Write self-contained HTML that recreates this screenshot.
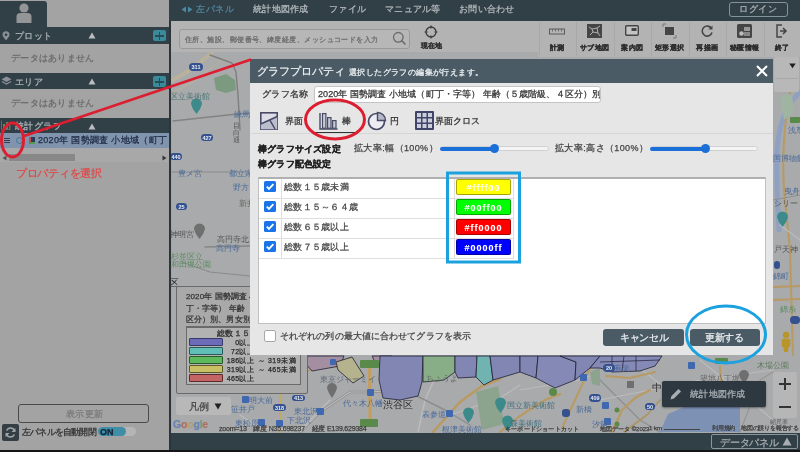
<!DOCTYPE html>
<html><head><meta charset="utf-8">
<style>
*{box-sizing:border-box;margin:0;padding:0}
html,body{width:800px;height:452px;overflow:hidden;background:#a8a9aa;font-family:"Liberation Sans",sans-serif;}
.a{position:absolute;white-space:nowrap;-webkit-text-stroke-width:0.25px}
#root{position:absolute;left:0;top:0;width:800px;height:452px;will-change:transform}
</style></head><body><div id="root">
<svg class="a" style="left:0;top:0" width="800" height="452">
<rect x="170" y="50" width="630" height="385" fill="#a9aaab"/>
<g fill="none" stroke-linecap="round" stroke-linejoin="round">
<!-- left strip -->
<path d="M168 83 L190 70 L212 53" stroke="#b9b19b" stroke-width="4"/>
<path d="M168 96 L196 80 L224 58" stroke="#b5af9f" stroke-width="1.5"/>
<path d="M210 55 L232 63 L236 72 L238 95 L240 130" stroke="#7e7e7e" stroke-width="1.4"/>
<path d="M173 121 L237 114 L250 113" stroke="#838383" stroke-width="1.3"/>
<path d="M170 172 L250 172" stroke="#8a8a8a" stroke-width="1.1"/>
<path d="M205 247 L250 246" stroke="#868686" stroke-width="1.3"/>
<path d="M182 262 L210 272 L250 276" stroke="#8a8a8a" stroke-width="1.2"/>
<path d="M230 290 L250 300" stroke="#8a8a8a" stroke-width="1"/>
<path d="M171 110 L171 440" stroke="#9aa3b6" stroke-width="1.2"/>
<!-- bottom strip light roads -->
<path d="M300 432 L320 412 L350 392 L372 392 L420 388" stroke="#8a8a8a" stroke-width="2.6"/>
<path d="M300 432 L320 412 L350 392 L372 392 L420 388" stroke="#bdbdbd" stroke-width="1.2"/>
<path d="M418 432 L425 400 L435 378" stroke="#bdbdbd" stroke-width="1.4"/>
<path d="M405 390 L445 410 L470 425" stroke="#8e8e8e" stroke-width="1.4"/>
<path d="M450 415 L500 398 L520 385" stroke="#bbbbbb" stroke-width="1.3"/>
<path d="M520 390 L580 380 L600 372" stroke="#bbbbbb" stroke-width="1.2"/>
<path d="M600 380 L640 420 L660 432" stroke="#8e8e8e" stroke-width="1.2"/>
<path d="M630 360 L680 400 L720 432" stroke="#bcbcbc" stroke-width="1.2"/>
<path d="M700 360 L740 392 L773 420" stroke="#bcbcbc" stroke-width="1.2"/>
<path d="M740 432 L760 380 L773 372" stroke="#909090" stroke-width="1"/>
<path d="M600 400 L650 390 L700 380 L773 370" stroke="#bcbcbc" stroke-width="1"/>
<!-- orange roads -->
<path d="M369.5 366 L370 420" stroke="#c39e5e" stroke-width="3"/>
<path d="M433 432 L460 402 L482 386 L500 379" stroke="#b89a62" stroke-width="2.6"/>
<path d="M500 432 L520 416 L545 400 L560 394" stroke="#b89a62" stroke-width="2.2"/>
<path d="M562 428 L575 400 L590 368 L600 358" stroke="#b89a62" stroke-width="2"/>
<path d="M606 376 L630 378 L655 372" stroke="#b89a62" stroke-width="2"/>
<path d="M612 432 L622 410 L635 398 L650 390" stroke="#b89a62" stroke-width="2.2"/>
<path d="M624 432 L648 414 L660 400" stroke="#ad9562" stroke-width="1.6"/>
<path d="M720 366 L724 432" stroke="#b89a62" stroke-width="1.8"/>
<path d="M300 372 L335 366 L350 358" stroke="#b89a62" stroke-width="1.6"/>
<!-- right strip -->
<path d="M800 92 Q780 110 777 150 Q776 190 779 230" stroke="#8fa1c2" stroke-width="5"/>
<path d="M790 92 Q781 140 784 190 L790 250 L793 355" stroke="#b89a62" stroke-width="2"/>
<path d="M773 287 L800 286 M773 300 L800 299" stroke="#b89a62" stroke-width="2"/>
<path d="M773 200 L800 195" stroke="#8e8e8e" stroke-width="1"/>
<path d="M780 225 L800 240" stroke="#bcbcbc" stroke-width="1.2"/>
</g>
<!-- parks / areas -->
<path d="M214 78 L226 74 L235 80 L236 90 L226 93 L216 90Z" fill="#7b9a80"/>
<path d="M780 96 L792 94 L794 112 L784 120Z" fill="#a0b4a2"/>
<path d="M476 392 L498 386 L504 424 L482 430Z" fill="#8ca48e"/>
<path d="M590 372 L600 368 L600 386 L592 384Z" fill="#8ca48e"/>
<!-- choropleth -->
<g stroke="#1f2035" stroke-width="0.8" stroke-linejoin="round">
<path d="M308 356 L344 356 L340 366 L312 371 L306 364Z" fill="#a48fa2"/>
<path d="M336 362 L352 357 L364 376 L353 383 L338 370Z" fill="#b4b38e"/>
<path d="M372 356 L392 356 L388 364 L376 364Z" fill="#a48fa2"/>
<path d="M380 356 L423 356 L422 382 L418 396 L400 400 L383 398 L379 380Z" fill="#8286b2"/>
<path d="M423 356 L455 356 L455 372 L444 380 L423 382Z" fill="#88ae88"/>
<path d="M455 356 L477 356 L476 377 L458 378 L455 372Z" fill="#8286b2"/>
<path d="M477 356 L490 356 L493 380 L484 385 L476 377Z" fill="#70b3b0"/>
<path d="M490 356 L520 356 L520 372 L500 378 L493 380Z" fill="#8286b2"/>
<path d="M520 356 L538 356 L536 378 L520 372Z" fill="#8286b2"/>
<path d="M538 356 L560 356 L576 362 L575 380 L555 388 L536 378Z" fill="#8589b5"/>
<path d="M560 356 L600 356 L590 368 L575 380 L576 362Z" fill="#8286b2"/>
<path d="M600 356 L662 356 L655 366 L640 371 L612 372 L600 368 L590 368Z" fill="#8589b5"/>
<path d="M612 356 L612 372 M624 356 L622 371 M636 356 L636 371 M600 362 L660 360" fill="none" stroke-width="0.7"/>
</g>
<!-- water -->
<path d="M660 432 L668 414 L700 400 L722 396 L740 400 L740 432Z" fill="#7d91b5"/>
<!-- shields / stations -->
<g fill="#34508f">
<rect x="189" y="63" width="14" height="8" rx="4"/>
<rect x="201" y="134" width="12" height="7" rx="3.5"/>
<rect x="170" y="153" width="12" height="7" rx="3.5"/>
<rect x="176" y="203" width="11" height="7" rx="3.5"/>
<rect x="603" y="364" width="12" height="8" rx="4"/>
<rect x="589" y="394" width="12" height="8" rx="4"/>
<rect x="645" y="403" width="10" height="7" rx="3.5"/>
<rect x="562" y="409" width="8" height="8" rx="3"/>
<rect x="774" y="261" width="6" height="8" rx="3"/>
<rect x="790" y="316" width="10" height="8" rx="4"/>
</g>
<g fill="#3f68b0">
<rect x="330" y="359" width="6" height="6" rx="1"/>
<rect x="367" y="389" width="7" height="7" rx="1"/>
<rect x="316" y="408" width="7" height="7" rx="1"/>
<rect x="446" y="410" width="7" height="7" rx="1"/>
<rect x="580" y="374" width="7" height="7" rx="1"/>
<rect x="602" y="402" width="7" height="7" rx="1"/>
<rect x="604" y="418" width="7" height="7" rx="1"/>
<rect x="688" y="362" width="7" height="7" rx="1"/>
</g>
<g fill="#5a8a4a">
<rect x="360" y="360" width="19" height="8" rx="1"/>
<rect x="360" y="419" width="18" height="8" rx="1"/>
<rect x="790" y="117" width="10" height="6" rx="1"/>
<rect x="715" y="358" width="13" height="6" rx="1"/>
<circle cx="553" cy="392" r="4"/>
<circle cx="617" cy="410" r="2.5"/><circle cx="617" cy="424" r="2.5"/>
</g>
<g fill="#3d8a8a">
<path d="M191 104 A5.5 5.5 0 1 1 202 104 Q201 109 196.5 114 Q192 109 191 104Z"/>
<path d="M495 403 A5.5 5.5 0 1 1 506 403 Q505 408 500.5 413 Q496 408 495 403Z"/>
<path d="M463 413 A5.5 5.5 0 1 1 474 413 Q473 418 468.5 423 Q464 418 463 413Z"/>
<path d="M502 421 A5.5 5.5 0 1 1 513 421 Q512 426 507.5 431 Q503 426 502 421Z"/>
<path d="M777 217 A5.5 5.5 0 1 1 788 217 Q787 222 782.5 227 Q778 222 777 217Z"/>
</g>
<g fill="#6f6f6f">
<path d="M194 229 A5.5 5.5 0 1 1 205 229 Q204 234 199.5 239 Q195 234 194 229Z"/>
<path d="M327 388 A5 5 0 1 1 337 388 Q336 392 332 398 Q328 392 327 388Z"/>
<path d="M739 375 A5 5 0 1 1 749 375 Q748 379 744 384 Q740 379 739 375Z"/>
<rect x="627" y="381" width="7" height="7"/>
</g>
<g font-size="7.5" font-family="Liberation Sans">
<text x="170" y="99" fill="#4a7474">区立美術館</text>
<text x="234" y="117" fill="#4a6a9a">練馬</text>
<text x="178" y="176" fill="#4a6a9a">豊メ宮</text>
<text x="229" y="176" fill="#4a6a9a">都立家</text>
<text x="233" y="190" fill="#4a6a9a">野方</text>
<text x="239" y="206" fill="#606060">新井</text>
<text x="170" y="237" fill="#555">神明宮</text>
<text x="217" y="242" fill="#555">高円寺北</text>
<text x="216" y="251" fill="#4a6a9a">高円寺</text>
<text x="171" y="259" fill="#5a8a60">杉並区立</text>
<text x="171" y="267" fill="#5a8a60">和田堀公園</text>
<text x="169" y="286" fill="#222" font-size="10">区</text>
<text x="320" y="382" fill="#5e6a78">東京ジャーミイ</text>
<text x="294" y="414" fill="#4a6a9a">東北沢</text>
<text x="343" y="406" fill="#4a6a9a">代々木八幡</text>
<text x="383" y="408" fill="#2a2a2a" font-size="9.5">渋谷区</text>
<text x="422" y="417" fill="#4a6a9a">表参道</text>
<text x="426" y="381" fill="#666">ちょうよ</text>
<text x="507" y="408" fill="#3e6e7e">国立新美術館</text>
<text x="442" y="432" fill="#4a6a9a">根津美術館</text>
<text x="510" y="426" fill="#3e6e7e">森美術館</text>
<text x="614" y="371" fill="#4a6a9a">有楽</text>
<text x="576" y="412" fill="#4a6a9a">新橋</text>
<text x="592" y="427" fill="#4a6a9a">汐留</text>
<text x="652" y="391" fill="#2a2a2a" font-size="9.5">中</text>
<text x="700" y="381" fill="#666">築地八丁堀</text>
<text x="757" y="368" fill="#5a7a5a">木場公園</text>
<text x="788" y="133" fill="#4a6a9a">浅草</text>
<text x="773" y="161" fill="#4a6a9a">国博物館</text>
<text x="784" y="194" fill="#4a6a9a">曳舟</text>
<text x="774" y="206" fill="#555">シリー</text>
<text x="774" y="252" fill="#555">戸天神</text>
<text x="773" y="279" fill="#4a6a9a">錦町</text>
<text x="780" y="312" fill="#5a8a60">錦糸</text>
<text x="770" y="424" fill="#555" font-size="6">縮尺率</text>
</g>
<g fill="none" stroke-linecap="round">
<path d="M280 394 L280 432" stroke="#c0a868" stroke-width="2"/>
<path d="M240 415 L260 428 L300 430 L330 400" stroke="#bcbcbc" stroke-width="1.3"/>
</g>
<g fill="#34508f">
<rect x="292" y="395" width="13" height="6" rx="3"/>
<rect x="273" y="404" width="13" height="7" rx="3.5"/>
</g>
<g fill="#3f68b0">
<rect x="242" y="396" width="7" height="7" rx="1"/>
<rect x="317" y="408" width="7" height="7" rx="1"/>
<rect x="258" y="419" width="7" height="7" rx="1"/>
<rect x="276" y="420" width="7" height="7" rx="1"/>
</g>
<g font-size="7.5" font-family="Liberation Sans" fill="#4a6a9a">
<text x="249" y="403">明大前</text>
<text x="231" y="412">笹井戸</text>
<text x="287" y="423">下北沢</text>
<text x="235" y="426">東松原</text>
</g>
<g font-size="5.5" font-family="Liberation Sans" font-weight="bold" fill="#e8ecf4" text-anchor="middle">
<text x="196" y="69.3">311</text>
<text x="207" y="139.5">427</text>
<text x="176" y="158.5">440</text>
<text x="181.5" y="208.5">25</text>
<text x="298.5" y="400">413</text>
<text x="279.5" y="409.5">318</text>
<text x="595" y="400">409</text>
<text x="650" y="408.5">50</text>
<text x="609" y="370">20</text>
</g>
<g font-size="6.5" font-family="Liberation Sans" fill="#555">
<text x="233" y="128">目</text><text x="233" y="135">白</text><text x="233" y="142">通</text>
</g>
</svg>
<div class="a" style="left:774px;top:57px;width:25px;height:35px;background:#b8b8b8;border-radius:2px"></div>
<div class="a" style="left:775px;top:78px;width:23px;height:1px;background:#a8a8a8;"></div>
<svg class="a" style="left:789px;top:62.5px" width="7" height="6"><path d="M0.3 0.5H6.7L3.5 5.2Z" fill="#1e1e1e"/></svg>
<div class="a" style="left:176px;top:286px;width:132px;height:108px;background:#a9a9a9;border:1px solid #6a6a6a;border-radius:2px"></div>
<div class="a" style="left:186px;top:293px;font-size:8px;line-height:8px;color:#333;letter-spacing:0.1px;">2020年 国勢調査 小地域（町</div>
<div class="a" style="left:186px;top:305px;font-size:8px;line-height:8px;color:#333;letter-spacing:0.1px;">丁・字等） 年齢（５歳階級、４</div>
<div class="a" style="left:186px;top:316px;font-size:8px;line-height:8px;color:#333;letter-spacing:0.1px;">区分）別、男女別人口</div>
<div class="a" style="left:186px;top:326px;width:115px;height:59px;background:#b2b2b2;border:1px solid #6a6a6a;border-top:2px solid #6a6a6a"></div>
<div class="a" style="left:217px;top:330px;font-size:8px;line-height:8px;color:#2a2a2a;letter-spacing:0.3px;">総数１５歳未満</div>
<div class="a" style="left:189px;top:338px;width:34px;height:8px;background:#6b6bb8;border:1px solid #3a3a6a;border-radius:1px"></div>
<div class="a" style="left:189px;top:347px;width:34px;height:8px;background:#5fbeb6;border:1px solid #2a5a5a;border-radius:1px"></div>
<div class="a" style="left:189px;top:356px;width:34px;height:8px;background:#5cba5c;border:1px solid #2a5a2a;border-radius:1px"></div>
<div class="a" style="left:189px;top:365px;width:34px;height:8px;background:#c8c062;border:1px solid #5a5a2a;border-radius:1px"></div>
<div class="a" style="left:189px;top:374px;width:34px;height:8px;background:#c46464;border:1px solid #5a2a2a;border-radius:1px"></div>
<div class="a" style="left:203px;top:339px;width:51px;text-align:right;font-size:7px;line-height:7px;color:#2a2a2a;letter-spacing:0.3px">0以上</div>
<div class="a" style="left:203px;top:348px;width:51px;text-align:right;font-size:7px;line-height:7px;color:#2a2a2a;letter-spacing:0.3px">72以上</div>
<div class="a" style="left:203px;top:357px;width:51px;text-align:right;font-size:7px;line-height:7px;color:#2a2a2a;letter-spacing:0.3px">186以上</div>
<div class="a" style="left:203px;top:366px;width:51px;text-align:right;font-size:7px;line-height:7px;color:#2a2a2a;letter-spacing:0.3px">319以上</div>
<div class="a" style="left:203px;top:375px;width:51px;text-align:right;font-size:7px;line-height:7px;color:#2a2a2a;letter-spacing:0.3px">465以上</div>
<div class="a" style="left:258px;top:357px;font-size:7px;line-height:7px;color:#2a2a2a;letter-spacing:0.5px;">～ 319未満</div>
<div class="a" style="left:258px;top:366px;font-size:7px;line-height:7px;color:#2a2a2a;letter-spacing:0.5px;">～ 465未満</div>
<div class="a" style="left:176px;top:397px;width:55px;height:18px;background:#b8b8b8;border-radius:2px"></div>
<div class="a" style="left:189px;top:402px;font-size:10px;line-height:10px;color:#444;">凡例</div>
<svg class="a" style="left:214px;top:403px" width="8" height="7"><path d="M0.5 0.5H7.5L4 6.5Z" fill="#222"/></svg>
<div class="a" style="left:173px;top:418px;font-size:10.5px;line-height:12px;font-weight:bold;color:#6a84b4;letter-spacing:-0.2px">G<span style="color:#b07060">o</span><span style="color:#b0a070">o</span>g<span style="color:#70a070">l</span><span style="color:#b07060">e</span></div>
<div class="a" style="left:219px;top:424.5px;font-size:7px;line-height:7px;color:#3f3f3f;letter-spacing:-0.2px;">zoom=13　緯度 N35.698237　経度 E139.629384</div>
<div class="a" style="left:505px;top:425.5px;font-size:6px;line-height:6px;color:#3f3f3f;letter-spacing:0.2px;">キーボードショートカット</div>
<div class="a" style="left:600px;top:425.5px;font-size:6px;line-height:6px;color:#3f3f3f;">地図データ ©2023</div>
<div class="a" style="left:649px;top:425px;font-size:6px;line-height:6px;color:#3f3f3f;">1 km</div>
<div class="a" style="left:664px;top:429px;width:36px;height:1.2px;background:#444;"></div>
<div class="a" style="left:712px;top:425px;font-size:6px;line-height:6px;color:#3f3f3f;letter-spacing:-0.2px;">利用規約　地図の誤りを報告する</div>
<div class="a" style="left:662px;top:381px;width:104px;height:26px;background:#2e3840;border-radius:2px;box-shadow:0 1px 2px rgba(0,0,0,.4)"></div>
<svg class="a" style="left:669px;top:387px" width="14" height="14"><path d="M1.5 12.5L2.5 9L9.5 2L12 4.5L5 11.5Z" fill="#a9b0b4"/></svg>
<div class="a" style="left:690px;top:390px;font-size:9px;line-height:9px;color:#a9b0b4;letter-spacing:0.3px;">統計地図作成</div>
<div class="a" style="left:773px;top:372px;width:24px;height:46px;background:#b6b6b6;border-radius:2px"></div>
<div class="a" style="left:779px;top:383px;width:12px;height:2px;background:#333;"></div>
<div class="a" style="left:784px;top:378px;width:2px;height:12px;background:#333;"></div>
<div class="a" style="left:779px;top:406px;width:12px;height:2px;background:#333;"></div>
<svg class="a" style="left:779px;top:331px" width="14" height="22"><circle cx="7" cy="4" r="3.2" fill="#b8962a"/><path d="M2.5 8.5Q7 6.5 11.5 8.5L11 16H9.5L9 21H5L4.5 16H3Z" fill="#b8962a"/></svg>
<div class="a" style="left:169px;top:433px;width:631px;height:17px;background:#313f46;"></div>
<div class="a" style="left:711px;top:434px;width:87px;height:15px;background:transparent;border:1px solid #8a969c;border-radius:2px"></div>
<div class="a" style="left:720px;top:438px;font-size:10px;line-height:10px;color:#a8aeb2;letter-spacing:-0.2px;">データパネル</div>
<svg class="a" style="left:782px;top:437px" width="10" height="9"><path d="M0.5 8.5H9.5L5 0.5Z" fill="#a8aeb2"/></svg>
<div class="a" style="left:0px;top:450px;width:800px;height:2px;background:#151515;"></div>
<div class="a" style="left:0px;top:0px;width:169px;height:450px;background:#a3a3a3;"></div>
<div class="a" style="left:169px;top:0px;width:2px;height:450px;background:#2b363c;"></div>
<div class="a" style="left:0px;top:1px;width:47px;height:27px;background:#313f46;border-radius:0 3px 0 0"></div>
<svg class="a" style="left:15px;top:2px" width="18" height="22"><circle cx="9" cy="6" r="4.6" fill="#939597"/><path d="M1.5 21V14.5Q1.5 11 5.5 11H12.5Q16.5 11 16.5 14.5V21Z" fill="#939597"/></svg>
<div class="a" style="left:0px;top:27px;width:169px;height:17px;background:#313f46;"></div>
<svg class="a" style="left:2px;top:31px" width="8" height="10"><path d="M4 9.5Q0.5 5.5 0.5 3.8A3.5 3.5 0 0 1 7.5 3.8Q7.5 5.5 4 9.5Z" fill="#8a9096"/><circle cx="4" cy="3.8" r="1.3" fill="#2e3b42"/></svg>
<div class="a" style="left:14.5px;top:31.5px;font-size:9px;line-height:9px;color:#adb4b8;letter-spacing:0.5px;">プロット</div>
<svg class="a" style="left:88px;top:32px" width="8" height="7"><path d="M0.5 6.5H7.5L4 0.5Z" fill="#b9bdbf"/></svg>
<div class="a" style="left:153px;top:30px;width:13px;height:11px;background:#3b8a9a;border-radius:2px"></div>
<div class="a" style="left:155px;top:35px;width:9px;height:1.5px;background:#2a4a55;"></div>
<div class="a" style="left:158.8px;top:31.5px;width:1.5px;height:8px;background:#2a4a55;"></div>
<div class="a" style="left:11px;top:54px;font-size:9px;line-height:9px;color:#6a6a6a;letter-spacing:0.3px;">データはありません</div>
<div class="a" style="left:0px;top:73px;width:169px;height:15.5px;background:#313f46;"></div>
<svg class="a" style="left:1px;top:76px" width="11" height="10"><path d="M5.5 0.5L10.5 3.3L5.5 6L0.5 3.3Z" fill="#8a9096"/><path d="M1 5.5L5.5 8L10 5.5" stroke="#8a9096" stroke-width="1.3" fill="none"/></svg>
<div class="a" style="left:14.5px;top:77.5px;font-size:9px;line-height:9px;color:#adb4b8;letter-spacing:0.5px;">エリア</div>
<svg class="a" style="left:88px;top:78px" width="8" height="7"><path d="M0.5 6.5H7.5L4 0.5Z" fill="#b9bdbf"/></svg>
<div class="a" style="left:153px;top:76px;width:13px;height:11px;background:#3b8a9a;border-radius:2px"></div>
<div class="a" style="left:155px;top:81px;width:9px;height:1.5px;background:#2a4a55;"></div>
<div class="a" style="left:158.8px;top:77.5px;width:1.5px;height:8px;background:#2a4a55;"></div>
<div class="a" style="left:11px;top:98.5px;font-size:9px;line-height:9px;color:#6a6a6a;letter-spacing:0.3px;">データはありません</div>
<div class="a" style="left:0px;top:117.5px;width:169px;height:15.5px;background:#313f46;"></div>
<svg class="a" style="left:1px;top:120px" width="10" height="10"><path d="M0.5 0.5V9.5H9.5" stroke="#5d6f66" stroke-width="1" fill="none"/><rect x="2" y="4" width="2" height="5" fill="#5f8a6a"/><rect x="5" y="2" width="2" height="7" fill="#5f8a6a"/><rect x="8" y="5" width="1.5" height="4" fill="#7a6a5a"/></svg>
<div class="a" style="left:14.5px;top:122.0px;font-size:9px;line-height:9px;color:#adb4b8;letter-spacing:0.5px;">統計グラフ</div>
<svg class="a" style="left:88px;top:122.5px" width="8" height="7"><path d="M0.5 6.5H7.5L4 0.5Z" fill="#b9bdbf"/></svg>
<div class="a" style="left:0;top:133px;width:169px;height:15px;background:#8094ae;overflow:hidden">
<div class="a" style="left:4px;top:5px;width:6px;height:1.3px;background:#3a3f50;box-shadow:0 2px 0 #3a3f50,0 4px 0 #3a3f50"></div>
<div class="a" style="left:15.5px;top:3.5px;width:7px;height:7px;background:transparent;border-radius:50%;border:1.5px solid #3f7896"></div>
<div class="a" style="left:29px;top:4px;width:6px;height:7px;background:#2b3a5a;border-left:2px solid #c0504d;border-bottom:2px solid #4f9f50"></div>
<div class="a" style="left:38px;top:2.5px;font-size:9px;line-height:9px;color:#1e2a44;letter-spacing:0.3px;">2020年 国勢調査 小地域（町丁・字等） 年齢</div>
</div>
<div class="a" style="left:0px;top:148px;width:169px;height:14px;background:#a8a8a8;"></div>
<div class="a" style="left:9px;top:154px;width:66px;height:7px;background:#888888;"></div>
<svg class="a" style="left:162px;top:155px" width="5" height="6"><path d="M0.5 0.5L4.5 3L0.5 5.5Z" fill="#333"/></svg>
<svg class="a" style="left:2px;top:155px" width="5" height="6"><path d="M4.5 0.5L0.5 3L4.5 5.5Z" fill="#555"/></svg>
<div class="a" style="left:16px;top:168px;font-size:11px;line-height:11px;color:#e04848;letter-spacing:-0.3px;">プロパティを選択</div>
<div class="a" style="left:18px;top:404px;width:131px;height:19px;background:transparent;border:1px solid #4a4a4a;border-radius:3px"></div>
<div class="a" style="left:66px;top:409.5px;font-size:9px;line-height:9px;color:#7a7a7a;letter-spacing:0.3px;">表示更新</div>
<div class="a" style="left:2px;top:424px;width:17px;height:17px;background:#333f45;border-radius:2px"></div>
<svg class="a" style="left:4px;top:426px" width="13" height="13"><path d="M10.5 4.5A4.3 4.3 0 0 0 2.7 4.5M2.5 8.5A4.3 4.3 0 0 0 10.3 8.5" stroke="#a0a6aa" stroke-width="1.6" fill="none"/><path d="M11.5 2V6H7.5Z M1.5 11V7H5.5Z" fill="#a0a6aa"/></svg>
<div class="a" style="left:22px;top:427.5px;font-size:9px;line-height:9px;color:#303030;letter-spacing:-0.8px;">左パネルを自動開閉</div>
<div class="a" style="left:98px;top:427px;width:38px;height:9px;background:#b5b5b5;border-radius:5px"></div>
<div class="a" style="left:98px;top:427px;width:28px;height:9px;background:#3f8ea6;border-radius:5px"></div>
<div class="a" style="left:100px;top:428px;font-size:9px;line-height:9px;color:#14243a;font-weight:bold;">ON</div>
<div class="a" style="left:169px;top:0px;width:631px;height:21px;background:#313f46;"></div>
<svg class="a" style="left:181px;top:6px" width="12" height="7"><path d="M0.5 3.5L5 0.5V6.5Z M11.5 3.5L7 0.5V6.5Z" fill="#4a8aa3"/></svg>
<div class="a" style="left:196px;top:5px;font-size:9px;line-height:9px;color:#5285a0;letter-spacing:0.5px;">左パネル</div>
<div class="a" style="left:253px;top:5px;font-size:9px;line-height:9px;color:#b4babe;letter-spacing:0.3px;">統計地図作成</div>
<div class="a" style="left:329px;top:5px;font-size:9px;line-height:9px;color:#b4babe;letter-spacing:0.3px;">ファイル</div>
<div class="a" style="left:385px;top:5px;font-size:9px;line-height:9px;color:#b4babe;letter-spacing:0.3px;">マニュアル等</div>
<div class="a" style="left:459px;top:5px;font-size:9px;line-height:9px;color:#b4babe;letter-spacing:0.3px;">お問い合わせ</div>
<div class="a" style="left:729px;top:2px;width:59px;height:15px;background:transparent;border:1px solid #87939a;border-radius:3px"></div>
<div class="a" style="left:739px;top:5px;font-size:9px;line-height:9px;color:#a8aeb2;letter-spacing:0.5px;">ログイン</div>
<div class="a" style="left:171px;top:21px;width:629px;height:31px;background:#b3b3b3;"></div>
<div class="a" style="left:538px;top:21px;width:262px;height:36px;background:#b3b3b3;"></div>
<div class="a" style="left:179px;top:29px;width:231px;height:20px;background:#b7b7b7;border:1px solid #9a9a9a;border-radius:3px"></div>
<div class="a" style="left:185px;top:36px;font-size:7px;line-height:7px;color:#6a6a6a;letter-spacing:0.45px;">住所、施設、郵便番号、緯度経度、メッシュコードを入力</div>
<svg class="a" style="left:392px;top:31px" width="15" height="15"><circle cx="6.3" cy="6.3" r="4.8" fill="none" stroke="#6a6a6a" stroke-width="1.3"/><path d="M9.8 9.8L13.5 13.5" stroke="#6a6a6a" stroke-width="1.6"/></svg>
<svg class="a" style="left:424px;top:25px" width="14" height="14"><circle cx="7" cy="7" r="5" fill="none" stroke="#3a3a3a" stroke-width="1.3"/><path d="M7 0.5V3.5M7 10.5V13.5M0.5 7H3.5M10.5 7H13.5" stroke="#3a3a3a" stroke-width="1.2"/></svg>
<div class="a" style="left:420.5px;top:42px;font-size:7px;line-height:7px;color:#333;letter-spacing:0.3px;font-weight:bold;">現在地</div>
<div class="a" style="left:538.5px;top:22px;width:1px;height:34px;background:#a8a8a8;"></div>
<div class="a" style="left:538.5px;top:44px;width:37.5px;text-align:center;font-size:7px;line-height:7px;font-weight:bold;color:#2e2e2e;letter-spacing:0.3px">計測</div>
<div class="a" style="left:576.0px;top:22px;width:1px;height:34px;background:#a8a8a8;"></div>
<div class="a" style="left:576.0px;top:44px;width:37.5px;text-align:center;font-size:7px;line-height:7px;font-weight:bold;color:#2e2e2e;letter-spacing:0.3px">サブ地図</div>
<div class="a" style="left:613.5px;top:22px;width:1px;height:34px;background:#a8a8a8;"></div>
<div class="a" style="left:613.5px;top:44px;width:37.5px;text-align:center;font-size:7px;line-height:7px;font-weight:bold;color:#2e2e2e;letter-spacing:0.3px">案内図</div>
<div class="a" style="left:651.0px;top:22px;width:1px;height:34px;background:#a8a8a8;"></div>
<div class="a" style="left:651.0px;top:44px;width:37.5px;text-align:center;font-size:7px;line-height:7px;font-weight:bold;color:#2e2e2e;letter-spacing:0.3px">矩形選択</div>
<div class="a" style="left:688.5px;top:22px;width:1px;height:34px;background:#a8a8a8;"></div>
<div class="a" style="left:688.5px;top:44px;width:37.5px;text-align:center;font-size:7px;line-height:7px;font-weight:bold;color:#2e2e2e;letter-spacing:0.3px">再描画</div>
<div class="a" style="left:726.0px;top:22px;width:1px;height:34px;background:#a8a8a8;"></div>
<div class="a" style="left:726.0px;top:44px;width:37.5px;text-align:center;font-size:7px;line-height:7px;font-weight:bold;color:#2e2e2e;letter-spacing:0.3px">秘匿情報</div>
<div class="a" style="left:763.5px;top:22px;width:1px;height:34px;background:#a8a8a8;"></div>
<div class="a" style="left:763.5px;top:44px;width:37.5px;text-align:center;font-size:7px;line-height:7px;font-weight:bold;color:#2e2e2e;letter-spacing:0.3px">終了</div>
<svg class="a" style="left:549px;top:27px" width="16" height="8"><rect x="0.5" y="2" width="15" height="5" fill="none" stroke="#5a5a5a" stroke-width="1"/><path d="M3.5 2V4.5M6.5 2V4.5M9.5 2V4.5M12.5 2V4.5" stroke="#5a5a5a" stroke-width="0.8"/></svg>
<svg class="a" style="left:587px;top:24px" width="15" height="14"><rect x="0" y="0" width="15" height="14" fill="#454545"/><path d="M2 3L5 5L10 4L13 2M3 11L6 8L11 9L13 12M5 5L6 8M10 4L11 9" stroke="#bbb" stroke-width="0.9" fill="none"/></svg>
<svg class="a" style="left:625px;top:25px" width="14" height="11"><rect x="0.7" y="0.7" width="12.6" height="9.6" rx="1" fill="#c4c4c4" stroke="#454545" stroke-width="1.4"/><rect x="6.5" y="3" width="5" height="3" fill="#454545"/></svg>
<svg class="a" style="left:662px;top:23px" width="15" height="16"><path d="M1 4V1H4M11 15H14V12" stroke="#777" stroke-width="1" fill="none"/><rect x="3" y="4" width="9" height="8" fill="#454545"/></svg>
<svg class="a" style="left:700px;top:24px" width="14" height="14"><path d="M11.5 4.5A5 5 0 1 0 12 8.5" stroke="#454545" stroke-width="1.6" fill="none"/><path d="M12.5 1.5L12.5 5.5L8.5 5.5Z" fill="#454545"/></svg>
<svg class="a" style="left:737px;top:24px" width="15" height="14"><rect x="0" y="0" width="15" height="14" rx="1.5" fill="#454545"/><rect x="7" y="3" width="6" height="4" fill="#999"/><rect x="7" y="8" width="6" height="4" fill="#888"/><circle cx="4.5" cy="9.5" r="2.3" fill="#bbb"/></svg>
<svg class="a" style="left:776px;top:24px" width="12" height="14"><path d="M6 1H1V13H6" stroke="#454545" stroke-width="1.5" fill="none"/><path d="M4 7H9M7 4L10 7L7 10" stroke="#454545" stroke-width="1.6" fill="none"/></svg>
<div class="a" style="left:250px;top:59px;width:523px;height:296px;background:#e6e6e6;"></div>
<div class="a" style="left:250px;top:59px;width:523px;height:23.5px;background:#4a5b65;"></div>
<div class="a" style="left:257px;top:65.5px;font-size:11px;line-height:11px;color:#eef1f3;">グラフプロパティ</div>
<div class="a" style="left:349px;top:69px;font-size:8px;line-height:8px;color:#eef1f3;letter-spacing:0.4px;">選択したグラフの編集が行えます。</div>
<svg class="a" style="left:755px;top:64px" width="14" height="14"><path d="M2 2L12 12M12 2L2 12" stroke="#fff" stroke-width="2"/></svg>
<div class="a" style="left:262px;top:90px;font-size:9px;line-height:9px;color:#333;letter-spacing:0.3px;">グラフ名称</div>
<div class="a" style="left:314px;top:86px;width:287px;height:17px;background:#fff;border:1px solid #c4c4c4;border-radius:3px;overflow:hidden">
<div class="a" style="left:3px;top:3px;font-size:9px;line-height:9px;color:#333;letter-spacing:0.1px;">2020年 国勢調査 小地域（町丁・字等） 年齢（５歳階級、４区分）別、男女別人口</div>
</div>
<svg class="a" style="left:259px;top:111px" width="20" height="20"><rect x="1.8" y="1.8" width="16.4" height="16.4" fill="#dcdde6" stroke="#474b66" stroke-width="1.6"/><path d="M1.8 13L18.2 5.5V18.2H1.8Z" fill="#bcbecd"/><path d="M1.8 13L18.2 5.5M11 9.3L16 18" stroke="#474b66" stroke-width="1.5" fill="none"/></svg>
<div class="a" style="left:285px;top:117px;font-size:9px;line-height:9px;color:#333;">界面</div>
<svg class="a" style="left:319px;top:112px" width="19" height="18"><path d="M1 1V17H18.5" stroke="#474b66" stroke-width="1.4" fill="none"/><rect x="3.5" y="1.6" width="3.4" height="14.6" fill="#c9cbd6" stroke="#474b66" stroke-width="1.2"/><rect x="8.6" y="5.6" width="3.4" height="10.6" fill="#c9cbd6" stroke="#474b66" stroke-width="1.2"/><rect x="13.6" y="8.6" width="3.4" height="7.6" fill="#c9cbd6" stroke="#474b66" stroke-width="1.2"/></svg>
<div class="a" style="left:342px;top:117px;font-size:9px;line-height:9px;color:#333;">棒</div>
<div class="a" style="left:315px;top:132px;width:40px;height:2px;background:#333;"></div>
<svg class="a" style="left:367px;top:111px" width="20" height="20"><circle cx="9.5" cy="10.5" r="8" fill="#ecedf3" stroke="#474b66" stroke-width="1.7"/><path d="M10.5 1.5A8 8 0 0 1 18.5 9.5H10.5Z" fill="#b5b8c8" stroke="#474b66" stroke-width="1.4"/></svg>
<div class="a" style="left:390px;top:117px;font-size:9px;line-height:9px;color:#333;">円</div>
<svg class="a" style="left:415px;top:111px" width="19" height="19"><rect x="0" y="0" width="19" height="19" rx="1" fill="#3f4468"/><g fill="#cdd0dc"><rect x="2" y="2" width="4" height="4"/><rect x="7.5" y="2" width="4" height="4"/><rect x="13" y="2" width="4" height="4"/><rect x="2" y="7.5" width="4" height="4"/><rect x="7.5" y="7.5" width="4" height="4"/><rect x="13" y="7.5" width="4" height="4"/><rect x="2" y="13" width="4" height="4"/><rect x="7.5" y="13" width="4" height="4"/><rect x="13" y="13" width="4" height="4"/></g></svg>
<div class="a" style="left:435px;top:117px;font-size:9px;line-height:9px;color:#333;letter-spacing:0.1px;">界面クロス</div>
<div class="a" style="left:251px;top:133px;width:522px;height:1px;background:#d6d6d6;"></div>
<div class="a" style="left:258px;top:145px;font-size:9px;line-height:9px;color:#222;letter-spacing:0.2px;font-weight:bold;">棒グラフサイズ設定</div>
<div class="a" style="left:258px;top:160px;font-size:9px;line-height:9px;color:#222;letter-spacing:0.2px;font-weight:bold;">棒グラフ配色設定</div>
<div class="a" style="left:354px;top:144px;font-size:9px;line-height:9px;color:#444;letter-spacing:0.4px;">拡大率:幅（100%）</div>
<div class="a" style="left:555px;top:144px;font-size:9px;line-height:9px;color:#444;letter-spacing:0.4px;">拡大率:高さ（100%）</div>
<div class="a" style="left:440px;top:146px;width:109px;height:5px;background:#f4f4f4;border:1px solid #d0d0d0;border-radius:3px"></div>
<div class="a" style="left:440px;top:146.5px;width:54px;height:4.5px;background:#1a6fd8;border-radius:3px"></div>
<div class="a" style="left:489.5px;top:144px;width:9px;height:9px;background:#1a6fd8;border-radius:50%"></div>
<div class="a" style="left:650px;top:146px;width:108px;height:5px;background:#f4f4f4;border:1px solid #d0d0d0;border-radius:3px"></div>
<div class="a" style="left:650px;top:146.5px;width:55px;height:4.5px;background:#1a6fd8;border-radius:3px"></div>
<div class="a" style="left:700.5px;top:144px;width:9px;height:9px;background:#1a6fd8;border-radius:50%"></div>
<div class="a" style="left:258px;top:177px;width:508px;height:147px;background:#fff;border:1px solid #c0c0c0;border-top:2px solid #b0b0b0"></div>
<div class="a" style="left:281px;top:179px;width:1px;height:79px;background:#dedede;"></div>
<div class="a" style="left:454px;top:179px;width:1px;height:79px;background:#dedede;"></div>
<div class="a" style="left:513px;top:179px;width:1px;height:79px;background:#dedede;"></div>
<div class="a" style="left:259px;top:198px;width:255px;height:1px;background:#dedede;"></div>
<div class="a" style="left:259px;top:218px;width:255px;height:1px;background:#dedede;"></div>
<div class="a" style="left:259px;top:238px;width:255px;height:1px;background:#dedede;"></div>
<div class="a" style="left:259px;top:258px;width:255px;height:1px;background:#dedede;"></div>
<svg class="a" style="left:264px;top:181px" width="12" height="11"><rect width="12" height="11" rx="1.5" fill="#1a73e8"/><path d="M2.8 5.6L5 7.9L9.4 3.2" stroke="#fff" stroke-width="1.8" fill="none"/></svg>
<div class="a" style="left:284px;top:183px;font-size:9px;line-height:9px;color:#444;letter-spacing:0.25px;">総数１５歳未満</div>
<div class="a" style="left:456px;top:179px;width:55px;height:16px;background:#ffff00;border:1px solid rgba(0,0,0,0.35);border-radius:2px;font-size:9px;font-weight:bold;color:#fff;text-align:center;line-height:17px;letter-spacing:1px;-webkit-text-stroke-width:0.1px">#ffff00</div>
<svg class="a" style="left:264px;top:201px" width="12" height="11"><rect width="12" height="11" rx="1.5" fill="#1a73e8"/><path d="M2.8 5.6L5 7.9L9.4 3.2" stroke="#fff" stroke-width="1.8" fill="none"/></svg>
<div class="a" style="left:284px;top:203px;font-size:9px;line-height:9px;color:#444;letter-spacing:0.25px;">総数１５～６４歳</div>
<div class="a" style="left:456px;top:199px;width:55px;height:16px;background:#00ff00;border:1px solid rgba(0,0,0,0.35);border-radius:2px;font-size:9px;font-weight:bold;color:#fff;text-align:center;line-height:17px;letter-spacing:1px;-webkit-text-stroke-width:0.1px">#00ff00</div>
<svg class="a" style="left:264px;top:221px" width="12" height="11"><rect width="12" height="11" rx="1.5" fill="#1a73e8"/><path d="M2.8 5.6L5 7.9L9.4 3.2" stroke="#fff" stroke-width="1.8" fill="none"/></svg>
<div class="a" style="left:284px;top:223px;font-size:9px;line-height:9px;color:#444;letter-spacing:0.25px;">総数６５歳以上</div>
<div class="a" style="left:456px;top:219px;width:55px;height:16px;background:#ff0000;border:1px solid rgba(0,0,0,0.35);border-radius:2px;font-size:9px;font-weight:bold;color:#fff;text-align:center;line-height:17px;letter-spacing:1px;-webkit-text-stroke-width:0.1px">#ff0000</div>
<svg class="a" style="left:264px;top:241px" width="12" height="11"><rect width="12" height="11" rx="1.5" fill="#1a73e8"/><path d="M2.8 5.6L5 7.9L9.4 3.2" stroke="#fff" stroke-width="1.8" fill="none"/></svg>
<div class="a" style="left:284px;top:243px;font-size:9px;line-height:9px;color:#444;letter-spacing:0.25px;">総数７５歳以上</div>
<div class="a" style="left:456px;top:239px;width:55px;height:16px;background:#0000ff;border:1px solid rgba(0,0,0,0.35);border-radius:2px;font-size:9px;font-weight:bold;color:#fff;text-align:center;line-height:17px;letter-spacing:1px;-webkit-text-stroke-width:0.1px">#0000ff</div>
<div class="a" style="left:264px;top:330px;width:12px;height:12px;background:#fff;border:1px solid #a8a8a8;border-radius:2px"></div>
<div class="a" style="left:280px;top:332px;font-size:9px;line-height:9px;color:#444;letter-spacing:0.1px;">それぞれの列の最大値に合わせてグラフを表示</div>
<div class="a" style="left:603px;top:329px;width:81px;height:17px;background:#4a5b65;border-radius:3px"></div>
<div class="a" style="left:620px;top:333px;font-size:10px;line-height:10px;color:#eef0f2;letter-spacing:-0.3px;">キャンセル</div>
<div class="a" style="left:690px;top:329px;width:70px;height:17px;background:#4a5b65;border-radius:3px"></div>
<div class="a" style="left:705px;top:333px;font-size:10px;line-height:10px;color:#eef0f2;letter-spacing:-0.3px;">更新する</div>
<svg class="a" style="left:0;top:0" width="800" height="452">
<g fill="none" stroke-width="3">
<path d="M24 136 L251 59.5" stroke="#dc1e30" stroke-width="2.5"/>
<ellipse cx="12.5" cy="140" rx="11" ry="17" stroke="#dc1e30"/>
<ellipse cx="335" cy="119.5" rx="29.5" ry="19.5" stroke="#dc1e30"/>
<rect x="447.5" y="173" width="72" height="89" stroke="#1ba1de"/>
<ellipse cx="726" cy="334.5" rx="39.5" ry="28.5" stroke="#1ba1de"/>
</g>
</svg>
</div></body></html>
